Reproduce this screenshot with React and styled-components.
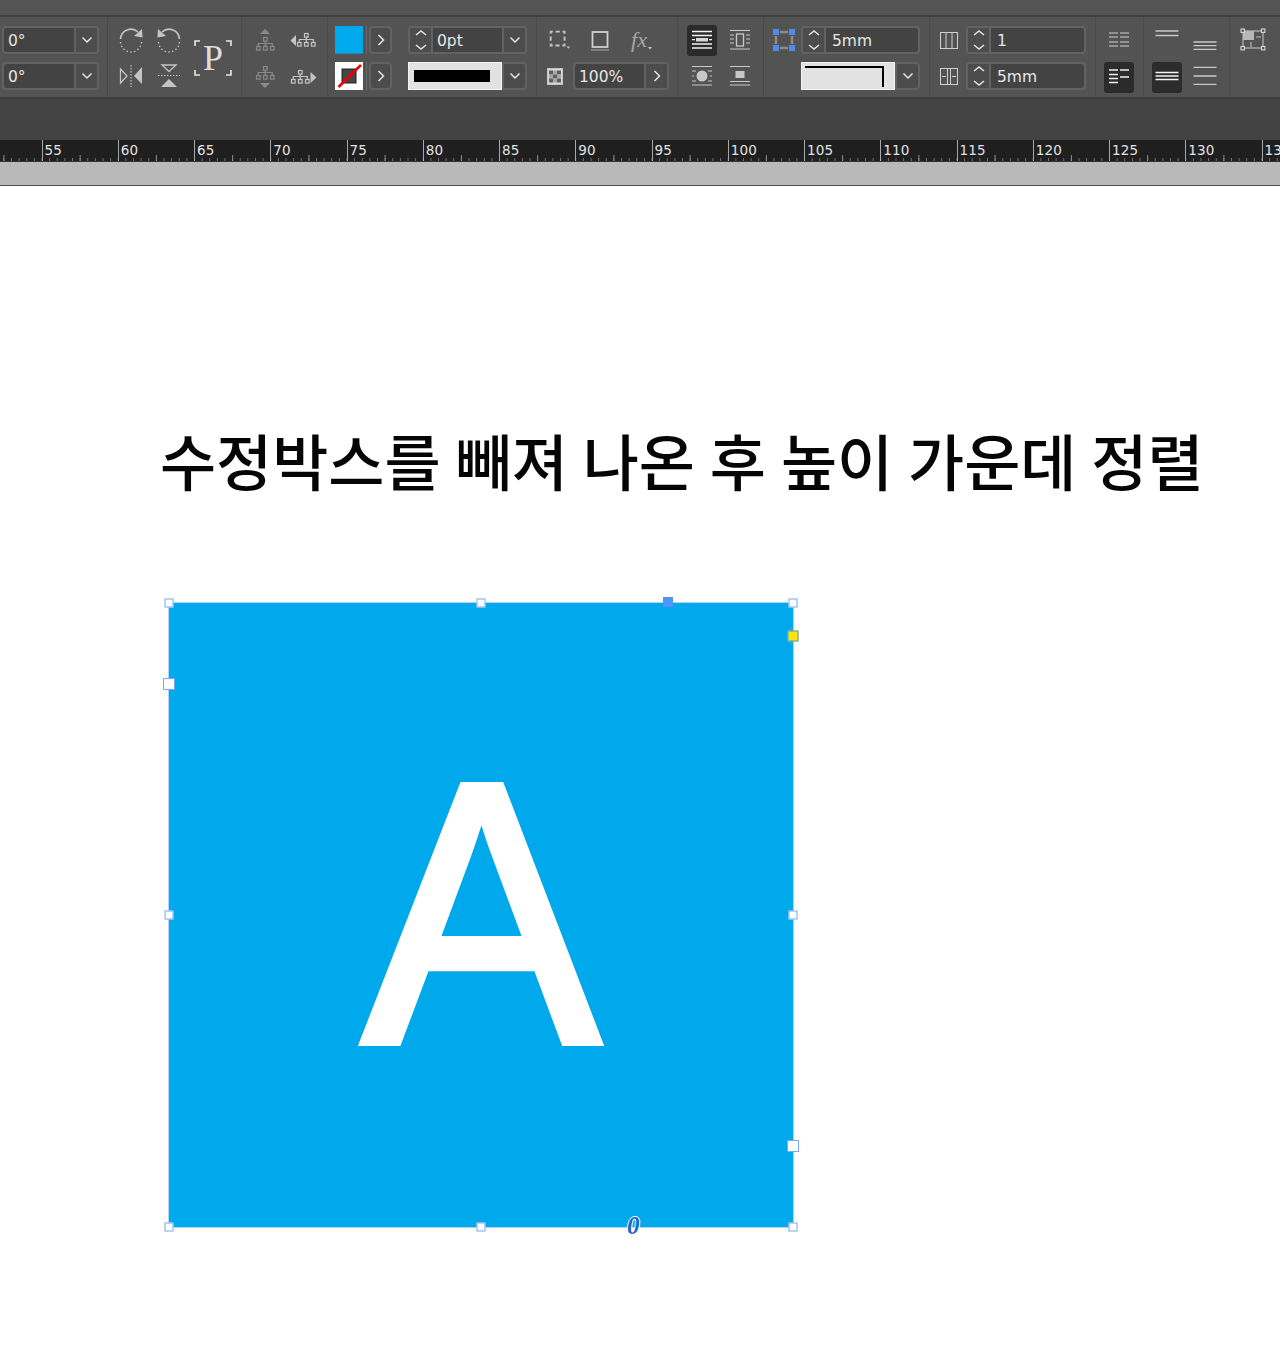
import styled, { createGlobalStyle } from "styled-components"

const GlobalStyle = createGlobalStyle`
    html, body {
        margin: 0;
        padding: 0;
        background: #ffffff;
        overflow: hidden;
    }
    body {
        font-family: "DejaVu Sans", sans-serif;
    }
`

const Page = styled("div")`
    width: 1280px;
    height: 1355px;
    overflow: hidden;
`

const TopStrip = styled("div")`
    height: 15px;
    background-color: #545454;
    border-bottom: 2px solid #3f3f3f;
`

const Toolbar = styled("div")`
    height: 82px;
    box-sizing: border-box;
    display: flex;
    padding: 0 0 0 2px;
    background-color: #535353;
    border-bottom: 2px solid #3e3e3e;
`

const Group = styled("div")`
    display: grid;
    grid-template-columns: ${props => props.$cols};
    grid-template-rows: 28px 28px;
    column-gap: ${props => props.$gap || 0}px;
    row-gap: 8px;
    box-sizing: border-box;
    height: 79px;
    width: ${props => props.$w}px;
    padding: 9px 0 0 ${props => props.$pl || 0}px;
    border-right: ${props => props.$sep ? "1px solid #4a4a4a" : "0"};
    flex: none;
`

const Stack = styled("div")`
    display: flex;
    flex-direction: column;
    gap: 8px;
    box-sizing: border-box;
    height: 79px;
    width: ${props => props.$w}px;
    padding: 9px 0 0 ${props => props.$pl || 0}px;
    border-right: 1px solid #4a4a4a;
    flex: none;
`

const Row = styled("div")`
    display: grid;
    grid-template-columns: ${props => props.$cols};
    column-gap: ${props => props.$gap || 0}px;
    height: 28px;
`

const Slot = styled("div")`
    display: flex;
    align-items: center;
    justify-content: center;
    height: ${props => props.$span ? "64px" : "28px"};
    grid-row: ${props => props.$span ? "span 2" : "auto"};
`

const Active = styled("div")`
    width: 30px;
    height: 31px;
    margin-top: ${props => props.$low ? 2 : 0}px;
    display: flex;
    align-items: center;
    justify-content: center;
    background-color: #2b2b2b;
    border-radius: 3px;
    flex: none;
`

const Field = styled("div")`
    display: flex;
    box-sizing: border-box;
    height: 28px;
    border: 2px solid #626262;
    border-radius: 4px;
    background-color: #434343;
    overflow: hidden;
`

const Stepper = styled("div")`
    width: 21px;
    flex: none;
    display: flex;
    align-items: center;
    justify-content: center;
    background-color: #4c4c4c;
    border-right: 2px solid #626262;
`

const Value = styled("div")`
    flex: 1;
    padding-left: ${props => props.$pl || 5}px;
    font-size: 15.5px;
    line-height: 26px;
    color: #e6e6e6;
    white-space: nowrap;
`

const Drop = styled("div")`
    width: 21px;
    flex: none;
    display: flex;
    align-items: center;
    justify-content: center;
    background-color: #4c4c4c;
    border-left: 2px solid #626262;
`

const StyleDrop = styled(Drop)`
    box-sizing: border-box;
    width: 25px;
    border: 2px solid #626262;
    border-radius: 0 4px 4px 0;
`

const ChevronButton = styled("div")`
    display: flex;
    align-items: center;
    justify-content: center;
    box-sizing: border-box;
    height: 28px;
    border: 2px solid #626262;
    border-radius: 4px;
    background-color: #4c4c4c;
`

const SwatchCell = styled("div")`
    box-sizing: border-box;
    height: 28px;
    width: 32px;
    border-right: 1px solid #6a6a6a;
`

const FillSwatch = styled("div")`
    box-sizing: border-box;
    height: 28px;
    width: 28px;
    background-color: #00a8ec;
    border-bottom: 1px solid #2b86b8;
`

const StrokeSwatch = styled("div")`
    box-sizing: border-box;
    width: 28px;
    height: 28px;
    background-color: #ffffff;
    display: flex;
    align-items: center;
    justify-content: center;
`

const StyleField = styled("div")`
    display: flex;
    box-sizing: border-box;
    height: 28px;
`

const StylePreview = styled("div")`
    flex: 1;
    display: flex;
    align-items: center;
    padding-left: 5px;
    background-color: #e2e2e2;
    border: 1px solid #f4f4f4;
`

const StrokeBar = styled("div")`
    width: 76px;
    height: 12px;
    background-color: #000000;
`

const CornerBox = styled("div")`
    flex: 1;
    background-color: #e2e2e2;
    border: 1px solid #f4f4f4;
    padding: 3px 10px 2px 3px;
    display: flex;
`

const CornerLine = styled("div")`
    flex: 1;
    border-top: 2px solid #000000;
    border-right: 2px solid #000000;
`

const PMark = styled("div")`
    position: relative;
    width: 38px;
    height: 36px;
    display: flex;
    align-items: center;
    justify-content: center;
    font-family: "Liberation Serif", serif;
    font-size: 36px;
    line-height: 36px;
    color: #dcdcdc;
`

const Bracket = styled("svg")`
    position: absolute;
    inset: 0;
`

const FxMark = styled("span")`
    font-family: "Liberation Serif", serif;
    font-style: italic;
    font-size: 22px;
    line-height: 26px;
    color: #a8a8a8;
`

const Band = styled("div")`
    height: 41px;
    background: linear-gradient(#454545, #424242);
`

const Ruler = styled("div")`
    display: flex;
    height: 22px;
    box-sizing: border-box;
    overflow: hidden;
    background-color: #1f1f1f;
    background-image:
        linear-gradient(to right, #8a8a8a 1px, transparent 1px),
        linear-gradient(to right, #707070 1px, transparent 1px);
    background-size: 76.25px 6px, 7.625px 3px;
    background-position: 3.4px 100%, 3.4px 100%;
    background-repeat: repeat-x;
    border-bottom: 1px solid #333333;
`

const RulerStart = styled("div")`
    width: 41.5px;
    flex: none;
`

const RulerCell = styled("div")`
    width: 76.25px;
    flex: none;
    box-sizing: border-box;
    border-left: 1px solid #a8a8a8;
    padding-left: 2px;
    font-size: 13.5px;
    line-height: 21px;
    letter-spacing: 0.1px;
    color: #e2e2e2;
`

const Pasteboard = styled("div")`
    height: 23px;
    background-color: #b9b9b9;
    border-bottom: 1px solid #4f4f4f;
`

const Canvas = styled("div")`
    padding: 236px 0 0 160px;
    background-color: #ffffff;
`

const Heading = styled("h1")`
    margin: 0;
    font-family: "Noto Sans CJK KR", sans-serif;
    font-weight: 500;
    font-size: 61px;
    word-spacing: 1.2px;
    line-height: 76px;
    color: #050505;
    white-space: nowrap;
`

const Frame = styled("div")`
    position: relative;
    width: 624px;
    height: 624px;
    margin: 105px 0 0 9px;
    background-color: #00a8ec;
    box-shadow: 0 0 0 1px #b4d3f8;
    display: flex;
    align-items: center;
    justify-content: center;
`

const BigA = styled("span")`
    font-family: "Liberation Sans", sans-serif;
    font-size: 372px;
    line-height: 1;
    color: #ffffff;
    -webkit-text-stroke: 8px #ffffff;
    transform: translateY(-2px) scaleX(0.953);
`

const Handle = styled("div")`
    position: absolute;
    box-sizing: border-box;
    left: ${props => props.$x}px;
    top: ${props => props.$y}px;
    width: ${props => props.$size || 9}px;
    height: ${props => props.$size || 9}px;
    transform: translate(-50%, -50%);
    background-color: ${props => props.$fill || "#ffffff"};
    border: 1px solid ${props => props.$line || "#7aa8ef"};
`

const RotationMark = styled("span")`
    position: absolute;
    left: 458px;
    top: 609px;
    font-family: "Liberation Serif", serif;
    font-style: italic;
    font-weight: 700;
    font-size: 25px;
    line-height: 28px;
    color: #1668cc;
    text-shadow: 1px 0 0 #fff, -1px 0 0 #fff, 0 1px 0 #fff, 0 -1px 0 #fff;
`

const Svg = ({ w = 26, h = 28, children }) => (
    <svg width={w} height={h} viewBox={`0 0 ${w} ${h}`} fill="none">{children}</svg>
)

const Chevron = () => (
    <Svg w={12} h={8}><path d="M1.5 1.5 L6 6 L10.5 1.5" stroke="#e4e4e4" strokeWidth="1.5" /></Svg>
)

const ChevronRight = () => (
    <Svg w={8} h={12}><path d="M1.5 1 L6.5 6 L1.5 11" stroke="#e4e4e4" strokeWidth="1.5" /></Svg>
)

const Arrows = () => (
    <Svg w={14} h={24}>
        <path d="M2 7 L7 3 L12 7" stroke="#e4e4e4" strokeWidth="1.5" />
        <path d="M2 17 L7 21 L12 17" stroke="#e4e4e4" strokeWidth="1.5" />
    </Svg>
)

const Rotate = ({ mirror }) => (
    <Svg>
        <g transform={mirror ? "translate(26 0) scale(-1 1)" : undefined}>
            <path d="M2.5 13 A10.5 10.5 0 0 1 20 6" stroke="#c4c4c4" strokeWidth="1.6" />
            <path d="M2.5 16 A10.5 10.5 0 0 0 23.5 15" stroke="#c4c4c4" strokeWidth="1.4" strokeDasharray="1.4 2.4" />
            <polygon points="24,3 24.5,11.5 16,10" fill="#c4c4c4" />
        </g>
    </Svg>
)

const FlipH = () => (
    <Svg>
        <polygon points="2.5,7 9,14 2.5,21" stroke="#c4c4c4" strokeWidth="1.3" />
        <path d="M13 3 V25" stroke="#c4c4c4" strokeWidth="1.2" strokeDasharray="1.4 1.6" />
        <polygon points="24,5 24,22 16,14" fill="#c4c4c4" />
    </Svg>
)

const FlipV = () => (
    <Svg>
        <polygon points="6,3 20,3 13,9.5" stroke="#c4c4c4" strokeWidth="1.3" />
        <path d="M2 13.5 H24" stroke="#c4c4c4" strokeWidth="1.2" strokeDasharray="1.4 1.6" />
        <polygon points="5,25 21,25 13,17" fill="#c4c4c4" />
    </Svg>
)

const treeLayouts = {
    up: { x: 5, top: 11, arrow: "14,3 19,8 9,8" },
    down: { x: 5, top: 4, arrow: "14,26 19,21 9,21" },
    left: { x: 8, top: 7, arrow: "1.5,14.5 7,9 7,20" },
    right: { x: 2, top: 8, arrow: "27.5,15.5 21.5,10 21.5,21" },
}

const Tree = ({ c, dir }) => {
    const { x, top, arrow } = treeLayouts[dir]
    const low = top + 9
    return (
        <Svg w={28}>
            <g stroke={c} strokeWidth="1.2">
                <rect x={x + 7.5} y={top + 0.5} width="3.6" height="3.6" />
                <rect x={x + 0.5} y={low + 0.5} width="3.6" height="3.6" />
                <rect x={x + 7.5} y={low + 0.5} width="3.6" height="3.6" />
                <rect x={x + 14.5} y={low + 0.5} width="3.6" height="3.6" />
                <path d={`M${x + 9.3} ${top + 4} V${low} M${x + 2.3} ${low} V${top + 6.5} H${x + 16.3} V${low}`} />
            </g>
            <polygon points={arrow} fill={c} />
        </Svg>
    )
}

const NoStroke = () => (
    <Svg w={26} h={26}>
        <rect x="6" y="6" width="14" height="14" fill="#464646" stroke="#222" />
        <path d="M2.5 24 L25 2" stroke="#f00000" strokeWidth="2.6" />
    </Svg>
)

const FitFrame = () => (
    <Svg>
        <rect x="4" y="5" width="15" height="15" stroke="#c4c4c4" strokeWidth="2" strokeDasharray="4.5 3" strokeDashoffset="2.2" />
        <polygon points="21,21 25,21 23,23.5" fill="#c4c4c4" />
    </Svg>
)

const ShadowBox = () => (
    <Svg>
        <rect x="5.5" y="6" width="15" height="15" stroke="#d0d0d0" strokeWidth="1.8" />
        <rect x="4" y="23" width="18" height="2" fill="#7c7c7c" />
    </Svg>
)

const Caret = () => (
    <Svg w={6} h={28}>
        <polygon points="1,21 5,21 3,23.5" fill="#c4c4c4" />
    </Svg>
)

const checkerCells = [0, 1, 2].flatMap(r => [0, 1, 2].map(c => ({ r, c })))

const Checker = () => (
    <Svg w={16} h={17}>
        <rect x="0.5" y="0.5" width="15" height="16" fill="#d8d8d8" stroke="#c4c4c4" />
        {checkerCells.map(({ r, c }) => (
            <rect
                key={`${r}${c}`}
                x={2 + c * 4}
                y={2.5 + r * 4}
                width="4"
                height="4"
                fill={(r + c) % 2 ? "#a4a4a4" : "#5e5e5e"}
            />
        ))}
    </Svg>
)

const lines = (ys, x1, x2) => ys.map(y => `M${x1} ${y} H${x2}`).join(" ")

const WrapNone = () => (
    <Svg w={22} h={22}>
        <path d={lines([2.5, 6.5, 15, 19], 1, 21)} stroke="#f2f2f2" strokeWidth="1.3" />
        <rect x="5" y="9" width="12" height="3.5" fill="#d8d8d8" />
        <path d="M1 10.7 H4 M18 10.7 H21" stroke="#f2f2f2" strokeWidth="1.3" />
    </Svg>
)

const WrapBox = ({ c = "#c8c8c8" }) => (
    <Svg w={22} h={22}>
        <path d={lines([1.5, 20], 1, 21)} stroke={c} strokeWidth="1.2" />
        <path d="M1 6 H5 M1 10 H5 M1 14 H5 M17 6 H21 M17 10 H21 M17 14 H21" stroke={c} strokeWidth="1.2" />
        <rect x="7.5" y="5" width="7" height="12" stroke={c} strokeWidth="1.3" />
    </Svg>
)

const WrapRound = ({ c = "#c8c8c8" }) => (
    <Svg w={22} h={22}>
        <path d={lines([1.5, 20], 1, 21)} stroke={c} strokeWidth="1.2" />
        <path d="M1 6 H5 M1 11 H3 M1 16 H5 M17 6 H21 M19 11 H21 M17 16 H21" stroke={c} strokeWidth="1.2" />
        <circle cx="11" cy="11" r="5.5" fill={c} />
    </Svg>
)

const WrapJump = ({ c = "#c8c8c8" }) => (
    <Svg w={22} h={22}>
        <path d={lines([1.5, 16.5, 20], 1, 21)} stroke={c} strokeWidth="1.2" />
        <rect x="6.5" y="6" width="9" height="7" fill={c} />
    </Svg>
)

const Constraint = () => (
    <Svg w={22} h={22}>
        <path d="M7 3 H15 M7 19 H15 M3 7 V15 M19 7 V15" stroke="#8a8a8a" strokeWidth="2.4" />
        <g fill="#4f8cea">
            <rect x="0" y="0" width="6" height="6" />
            <rect x="16" y="0" width="6" height="6" />
            <rect x="0" y="16" width="6" height="6" />
            <rect x="16" y="16" width="6" height="6" />
        </g>
    </Svg>
)

const Columns = () => (
    <Svg w={18} h={18}>
        <rect x="0.5" y="1.5" width="17" height="16" stroke="#cfcfcf" />
        <path d="M6 1.5 V17.5 M12 1.5 V17.5" stroke="#cfcfcf" />
    </Svg>
)

const Gutter = () => (
    <Svg w={18} h={18}>
        <rect x="0.5" y="1.5" width="17" height="16" stroke="#cfcfcf" />
        <path d="M7.5 1.5 V17.5 M10.5 1.5 V17.5" stroke="#cfcfcf" />
        <path d="M2 9.5 H6 M16 9.5 H12" stroke="#cfcfcf" />
    </Svg>
)

const TwoColumnLines = ({ active }) => {
    const c = active ? "#f0f0f0" : "#a8a8a8"
    return (
        <Svg w={24} h={20}>
            <path d={lines(active ? [3, 7.5, 11.5, 15.5] : [3, 7, 12, 16], 2, 11)} stroke={c} strokeWidth="1.3" />
            <path d={lines(active ? [3, 10] : [3, 7, 12, 16], 13, 22)} stroke={c} strokeWidth="1.3" />
        </Svg>
    )
}

const LineSet = ({ ys, c = "#c8c8c8" }) => (
    <Svg w={24} h={28}>
        <path d={lines(ys, 0.5, 23.5)} stroke={c} strokeWidth="1.3" />
    </Svg>
)

const FrameOpts = () => (
    <Svg w={26} h={26}>
        <rect x="3" y="4" width="20" height="17" stroke="#b8b8b8" strokeWidth="1.2" />
        <rect x="3" y="4" width="11" height="9" fill="#b8b8b8" />
        <path d="M21 10 H16 M11 20 V15" stroke="#b8b8b8" strokeWidth="1.2" />
        <g fill="#535353" stroke="#d8d8d8" strokeWidth="1.1">
            <rect x="1" y="2" width="3.4" height="3.4" />
            <rect x="21.5" y="2" width="3.4" height="3.4" />
            <rect x="1" y="19.5" width="3.4" height="3.4" />
            <rect x="21.5" y="19.5" width="3.4" height="3.4" />
        </g>
    </Svg>
)

const NumberField = ({ value }) => (
    <Field>
        <Stepper><Arrows /></Stepper>
        <Value $pl={6}>{value}</Value>
    </Field>
)

const DropField = ({ value, stepper }) => (
    <Field>
        {stepper && <Stepper><Arrows /></Stepper>}
        <Value $pl={4}>{value}</Value>
        <Drop><Chevron /></Drop>
    </Field>
)

const rulerLabels = [55, 60, 65, 70, 75, 80, 85, 90, 95, 100, 105, 110, 115, 120, 125, 130, 135]

const handles = [
    [0, 0], [312, 0], [624, 0],
    [0, 312], [624, 312],
    [0, 624], [312, 624], [624, 624],
]

const App = () => {
    return (
        <Page>
            <GlobalStyle />
            <TopStrip />
            <Toolbar>
                <Group $cols="97px" $w={106} $sep>
                    <DropField value="0°" />
                    <DropField value="0°" />
                </Group>
                <Group $cols="38px 38px 50px" $w={134} $pl={4} $sep>
                    <Slot><Rotate /></Slot>
                    <Slot><Rotate mirror /></Slot>
                    <Slot $span>
                        <PMark>
                            P
                            <Bracket width="38" height="36" viewBox="0 0 38 36" fill="none">
                                <path d="M1 6 V1 H6 M32 1 H37 V6 M37 30 V35 H32 M6 35 H1 V30" stroke="#e8e8e8" strokeWidth="1.6" />
                            </Bracket>
                        </PMark>
                    </Slot>
                    <Slot><FlipH /></Slot>
                    <Slot><FlipV /></Slot>
                </Group>
                <Group $cols="38px 38px" $w={86} $pl={4} $sep>
                    <Slot><Tree c="#8a8a8a" dir="up" /></Slot>
                    <Slot><Tree c="#c4c4c4" dir="left" /></Slot>
                    <Slot><Tree c="#8a8a8a" dir="down" /></Slot>
                    <Slot><Tree c="#c4c4c4" dir="right" /></Slot>
                </Group>
                <Group $cols="34px 23px 16px 119px" $w={209} $pl={7} $sep>
                    <SwatchCell><FillSwatch /></SwatchCell>
                    <ChevronButton><ChevronRight /></ChevronButton>
                    <span />
                    <DropField value="0pt" stepper />
                    <SwatchCell><StrokeSwatch><NoStroke /></StrokeSwatch></SwatchCell>
                    <ChevronButton><ChevronRight /></ChevronButton>
                    <span />
                    <StyleField>
                        <StylePreview><StrokeBar /></StylePreview>
                        <StyleDrop><Chevron /></StyleDrop>
                    </StyleField>
                </Group>
                <Stack $w={141} $pl={10}>
                    <Row $cols="24px 3px 52px 32px">
                        <Slot><FitFrame /></Slot>
                        <span />
                        <Slot><ShadowBox /></Slot>
                        <Slot><FxMark>fx</FxMark><Caret /></Slot>
                    </Row>
                    <Row $cols="16px 96px" $gap={10}>
                        <Slot><Checker /></Slot>
                        <Field>
                            <Value $pl={4}>100%</Value>
                            <Drop><ChevronRight /></Drop>
                        </Field>
                    </Row>
                </Stack>
                <Group $cols="38px 38px" $w={86} $pl={5} $sep>
                    <Slot><Active><WrapNone /></Active></Slot>
                    <Slot><WrapBox /></Slot>
                    <Slot><WrapRound /></Slot>
                    <Slot><WrapJump /></Slot>
                </Group>
                <Group $cols="22px 119px" $gap={6} $w={166} $pl={9} $sep>
                    <Slot><Constraint /></Slot>
                    <NumberField value="5mm" />
                    <span />
                    <StyleField>
                        <CornerBox><CornerLine /></CornerBox>
                        <StyleDrop><Chevron /></StyleDrop>
                    </StyleField>
                </Group>
                <Group $cols="18px 120px" $gap={8} $w={166} $pl={10} $sep>
                    <Slot><Columns /></Slot>
                    <NumberField value="1" />
                    <Slot><Gutter /></Slot>
                    <NumberField value="5mm" />
                </Group>
                <Group $cols="31px" $w={48} $pl={7} $sep>
                    <Slot><TwoColumnLines /></Slot>
                    <Slot><Active $low><TwoColumnLines active /></Active></Slot>
                </Group>
                <Group $cols="38px 38px" $w={86} $pl={4} $sep>
                    <Slot><LineSet ys={[5, 9.5]} /></Slot>
                    <Slot><LineSet ys={[16, 19.6, 23.3]} /></Slot>
                    <Slot><Active $low><LineSet ys={[9.5, 13, 16.5]} c="#f4f4f4" /></Active></Slot>
                    <Slot><LineSet ys={[5.3, 14, 22.3]} /></Slot>
                </Group>
                <Group $cols="46px" $w={50}>
                    <Slot><FrameOpts /></Slot>
                </Group>
            </Toolbar>
            <Band />
            <Ruler>
                <RulerStart />
                {rulerLabels.map(label => (
                    <RulerCell key={label}>{label}</RulerCell>
                ))}
            </Ruler>
            <Pasteboard />
            <Canvas>
                <Heading>수정박스를 빼져 나온 후 높이 가운데 정렬</Heading>
                <Frame>
                    <BigA>A</BigA>
                    {handles.map(([x, y]) => (
                        <Handle key={`${x}-${y}`} $x={x} $y={y} />
                    ))}
                    <Handle $x={0} $y={81} $size={12} />
                    <Handle $x={624} $y={543} $size={12} />
                    <Handle $x={499} $y={-1} $size={10} $fill="#4f94fb" $line="#4f94fb" />
                    <Handle $x={624} $y={33} $size={11} $fill="#ffe600" $line="#4f94e8" />
                    <RotationMark>0</RotationMark>
                </Frame>
            </Canvas>
        </Page>
    )
}

export default App
